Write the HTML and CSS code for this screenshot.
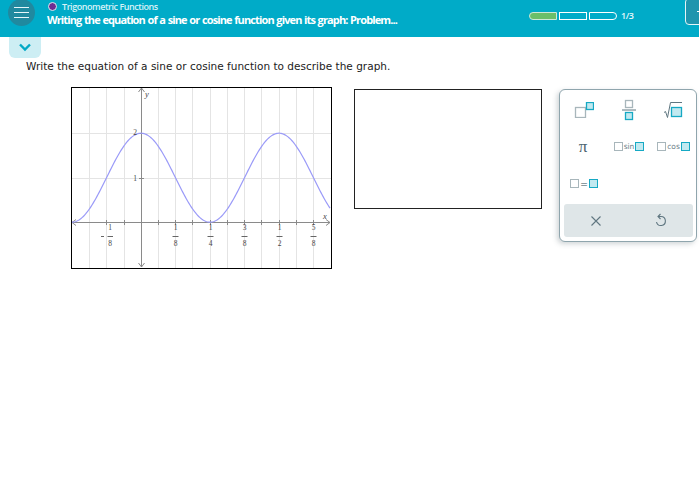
FILE: index.html
```html
<!DOCTYPE html>
<html lang="en">
<head>
<meta charset="utf-8">
<title>Trigonometric Functions</title>
<link rel="stylesheet" href="styles.css">
</head>
<body>
<header class="topbar">
  <button class="menu" aria-label="Menu"><span></span><span></span><span></span></button>
  <div class="titles">
    <div class="topic"><i class="dot"></i>Trigonometric Functions</div>
    <div class="title">Writing the equation of a sine or cosine function given its graph: Problem...</div>
  </div>
  <div class="progress">
    <div class="bar"><span class="seg s1"></span><span class="seg s2"></span><span class="seg s3"></span></div>
    <span class="count">1/3</span>
  </div>
  <div class="corner"><span></span></div>
</header>
<div class="tab"><svg width="14" height="9" viewBox="0 0 14 9"><path d="M2 1.500 7 6.500 12 1.500" fill="none" stroke="#00a9c6" stroke-width="2.400"/></svg></div>
<p class="prompt">Write the equation of a sine or cosine function to describe the graph.</p>
<main class="work">
  <div class="graph">
    <svg width="261" height="182" viewBox="71 87 261 182">
      <g class="grid">
        <path d="M89.500 87V268M106.500 87V268M124.500 87V268M158.500 87V268M175.500 87V268M192.500 87V268M210.500 87V268M227.500 87V268M244.500 87V268M261.500 87V268M279.500 87V268M296.500 87V268M313.500 87V268"/>
        <path d="M71 133.500H331M71 178.500H331"/>
      </g>
      <g class="axes">
        <path d="M141.500 88V267M72 222.500H330"/>
        <path d="M138.500 92 141.500 88 144.500 92M138.500 263 141.500 267 144.500 263M76 219.500 72 222.500 76 225.500M326 219.500 330 222.500 326 225.500"/>
        <path d="M106.500 220V225M124.500 220V225M158.500 220V225M175.500 220V225M192.500 220V225M210.500 220V225M227.500 220V225M244.500 220V225M261.500 220V225M279.500 220V225M296.500 220V225M313.500 220V225M139 178.500H144M139 133.500H144"/>
      </g>
      <path id="curve" class="curve" d="M72 222"/>
      <g class="labels">
        <text x="147" y="97" class="var">y</text>
        <text x="325" y="219" class="var">x</text>
        <text x="135" y="135">2</text>
        <text x="135" y="181">1</text>
        <text x="110" y="230">1</text><path d="M101 236.500H104M107.500 236.500H113"/><text x="110" y="246">8</text>
        <text x="175.500" y="230">1</text><path d="M172.500 236.500H178.500"/><text x="175.500" y="246">8</text>
        <text x="210.500" y="230">1</text><path d="M207.500 236.500H213.500"/><text x="210.500" y="246">4</text>
        <text x="244.500" y="230">3</text><path d="M241.500 236.500H247.500"/><text x="244.500" y="246">8</text>
        <text x="279.500" y="230">1</text><path d="M276.500 236.500H282.500"/><text x="279.500" y="246">2</text>
        <text x="313.500" y="230">5</text><path d="M310.500 236.500H316.500"/><text x="313.500" y="246">8</text>
      </g>
    </svg>
  </div>
  <div class="answer"></div>
  <aside class="panel">
    <div class="keys">
      <div class="key"><svg width="20" height="16" viewBox="0 0 20 16"><rect class="b" x="1.500" y="5.500" width="10" height="10"/><rect class="t" x="12.500" y="0.500" width="7" height="7"/></svg></div>
      <div class="key"><svg width="16" height="22" viewBox="0 0 16 22"><rect class="b" x="4.500" y="1.500" width="7" height="7"/><path class="l" d="M1 11H15"/><rect class="t" x="4.500" y="13.500" width="7" height="7"/></svg></div>
      <div class="key"><svg width="21" height="18" viewBox="0 0 21 18"><path class="l" d="M1 11.500 2.500 10.500 4.500 16.500 7.500 1.500H19"/><rect class="t" x="8.500" y="6.500" width="10" height="9"/></svg></div>
      <div class="key pi">π</div>
      <div class="key fn"><i class="bx"></i><em>sin</em><i class="tl"></i></div>
      <div class="key fn"><i class="bx"></i><em>cos</em><i class="tl"></i></div>
      <div class="key fn"><i class="bx"></i><b>=</b><i class="tl"></i></div>
    </div>
    <div class="actions">
      <svg width="14" height="14" viewBox="0 0 14 14"><path class="act" d="M2.500 2.500 11.500 11.500M11.500 2.500 2.500 11.500"/></svg>
      <svg width="14" height="16" viewBox="0 0 14 16"><path class="act" d="M6.500 1 4 3.500 6.500 6M4.500 3.500H7A4.500 4.500 0 1 1 2.500 9"/></svg>
    </div>
  </aside>
</main>
<script src="graph.js"></script>
</body>
</html>
```
FILE: graph.js
```js
var d = "";
for (var x = 72; x <= 330; x += 1) {
  var y = 177.7 + 44.5 * Math.cos((x - 72) * Math.PI / 69);
  d += (d ? "L" : "M") + x + " " + y.toFixed(2);
}
document.getElementById("curve").setAttribute("d", d);
```
FILE: styles.css
```css
* { box-sizing: border-box; }
html, body { margin: 0; height: 497px; overflow: hidden; background: #fff; }
body { font-family: "DejaVu Sans", sans-serif; color: #222; }

.topbar { height: 37px; background: #00abc8; display: flex; align-items: flex-start; color: #fff; overflow: hidden; }
.menu { width: 27px; height: 27px; margin: -1px 0 0 8px; padding: 0; border: 0; border-radius: 50%; background: #20899f; display: flex; flex-direction: column; align-items: center; justify-content: center; gap: 3.500px; flex: none; }
.menu span { width: 15px; height: 1.500px; background: #e6f6f9; }
.titles { margin-left: 12px; width: 480px; flex: none; font-family: "Open Sans", sans-serif; }
.topic { display: flex; align-items: center; gap: 5px; font-size: 9px; font-weight: 600; height: 13px; margin-top: 0; color: #d6f2f7; letter-spacing: -.45px; }
.dot { width: 9px; height: 9px; border-radius: 50%; background: #6f2c91; border: 1px solid #d8eef3; margin-left: 1px; flex: none; }
.title { font-size: 11px; font-weight: 700; letter-spacing: -.88px; word-spacing: .6px; margin-top: -1px; white-space: nowrap; }
.progress { display: flex; align-items: center; gap: 4px; margin: 9px 0 0 2px; }
.bar { display: flex; gap: 2px; }
.seg { width: 28px; height: 8px; border: 1px solid #fff; display: block; }
.s1 { background: #6abf69; border-color: #cfe9d8; border-radius: 4px 0 0 4px; }
.s3 { border-radius: 0 4px 4px 0; }
.count { font: 600 9px "Open Sans", sans-serif; letter-spacing: -.4px; color: #e6f8fb; }
.corner { position: absolute; left: 685px; top: -2px; width: 20px; height: 27px; background: #1f95ae; border: 1px solid #e3f4f7; border-radius: 4px; }
.corner span { position: absolute; left: 11px; top: 12px; width: 4px; height: 1px; background: #fff; }

.tab { width: 32px; height: 21px; margin-left: 9px; background: #cdeef4; border-radius: 0 0 6px 6px; display: flex; align-items: center; justify-content: center; }
.prompt { margin: 0 0 0 26px; height: 29px; padding-top: 1px; font-size: 10.500px; line-height: 14px; letter-spacing: .015px; }

.work { display: flex; align-items: flex-start; padding-left: 71px; }
.graph { width: 261px; height: 182px; flex: none; position: relative; }
.graph::after { content: ""; position: absolute; inset: 0; border: 1.500px solid #000; }
.graph svg { display: block; }
.grid path { stroke: #e4e4e4; fill: none; }
.axes path { stroke: #8a8a8a; fill: none; }
.curve { fill: none; stroke: #9a9af8; stroke-width: 1.200; }
.labels text { font: 7.500px "Liberation Serif", serif; text-anchor: middle; fill: #444; }
.labels path { stroke: #666; fill: none; }
.labels .var { font-style: italic; font-size: 8.500px; }

.answer { width: 188px; height: 120px; margin: 2px 0 0 22px; border: 1px solid #222; flex: none; }
.panel { width: 138px; height: 153px; margin: 2px 0 0 17px; flex: none; border: 1px solid #8fa5ad; border-radius: 6px; background: #fff; box-shadow: -2px 2px 5px rgba(70,90,100,.25); display: flex; flex-direction: column; padding: 0 3px 4px 4px; }
.keys { flex: none; height: 114px; display: grid; grid-template-columns: 40px 50px 39px; grid-template-rows: 40px 33px 41px; align-items: center; justify-items: center; }
.keys svg { display: block; }
.key { display: flex; }
.b { fill: #fff; stroke: #a8b6bb; stroke-width: 1.300; }
.t { fill: #c2e9f0; stroke: #16a9c4; stroke-width: 1.300; }
.l { fill: none; stroke: #5f7680; stroke-width: 1; }
.pi { font: 17px "Liberation Serif", serif; color: #4e6670; line-height: 1; margin-right: 2px; }
.fn { align-items: center; gap: 1px; }
.fn em { font: normal 7.500px "DejaVu Sans", sans-serif; color: #6c8089; }
.fn b { font: 700 9px "DejaVu Sans", sans-serif; color: #8a9aa0; }
.bx, .tl { display: block; width: 9px; height: 9px; border: 1.300px solid #a8b6bb; background: #fff; }
.tl { border-color: #16a9c4; background: #c2e9f0; }
.actions { flex: none; height: 33px; background: #dfe6e8; border-radius: 3px; display: flex; align-items: center; gap: 51px; padding-left: 25px; }
.act { fill: none; stroke: #5f7680; stroke-width: 1.100; }
```
